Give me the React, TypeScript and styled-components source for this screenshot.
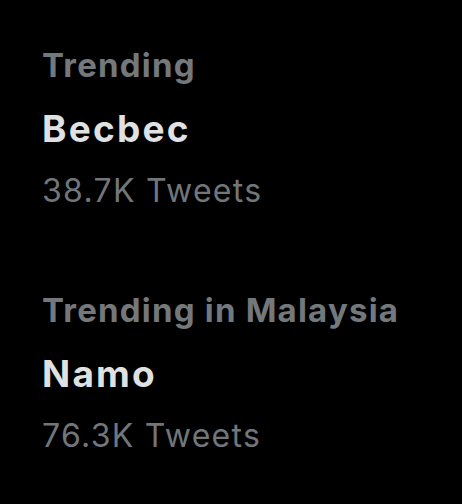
import React from 'react';
import styled, { createGlobalStyle } from 'styled-components';

const GlobalStyle = createGlobalStyle`
  html, body {
    margin: 0;
    padding: 0;
    background: #000;
  }
  body {
    font-family: Inter, "Noto Sans", sans-serif;
  }
`

const Page = styled.div`
  width: 462px;
  height: 504px;
  background: #000;
  padding: 35px 0 0 42px;
  box-sizing: border-box;
  display: flex;
  flex-direction: column;
  gap: 62px;
`

const Trend = styled.div`
  display: flex;
  flex-direction: column;
`

const Context = styled.div`
  color: #73787d;
  font-size: 33px;
  font-weight: 700;
  line-height: 60px;
  letter-spacing: 1.2px;
`

const Topic = styled.div`
  color: #dfe1e2;
  font-size: 37px;
  font-weight: 700;
  line-height: 68px;
  letter-spacing: 2.2px;
`

const Count = styled.div`
  color: #71767b;
  font-size: 32px;
  font-weight: 400;
  line-height: 55px;
  letter-spacing: 1.3px;
`

const trends = [
  { context: 'Trending', topic: 'Becbec', count: '38.7K Tweets' },
  { context: 'Trending in Malaysia', topic: 'Namo', count: '76.3K Tweets' },
]

const App = () => {
  return (
    <>
      <GlobalStyle />
      <Page>
        {trends.map(t => (
          <Trend key={t.topic}>
            <Context>{t.context}</Context>
            <Topic>{t.topic}</Topic>
            <Count>{t.count}</Count>
          </Trend>
        ))}
      </Page>
    </>
  );
};

export default App;
